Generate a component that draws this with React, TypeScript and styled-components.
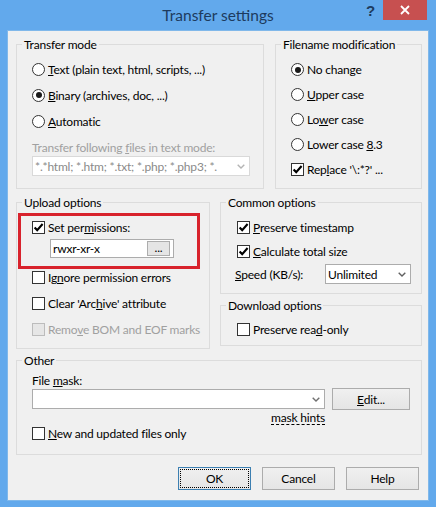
import styled, { createGlobalStyle } from "styled-components"

const GlobalStyle = createGlobalStyle`
  html, body {
    margin: 0;
    padding: 0;
  }
  body {
    font-family: Lato, "Noto Sans", sans-serif;
    font-size: 12px;
    letter-spacing: -0.2px;
    color: #000;
  }
`

type BoxProps = {
  checked?: boolean
  disabled?: boolean
}

const Check = (props: BoxProps) => (
  <CheckBox $disabled={props.disabled}>
    {props.checked && (
      <svg width="11" height="11" viewBox="0 0 11 11">
        <path d="M1.6 5.4 L4.2 8.1 L9.6 2" fill="none" stroke="#000" strokeWidth="2.1" />
      </svg>
    )}
  </CheckBox>
)

const Radio = (props: BoxProps) => (
  <RadioCircle>{props.checked && <RadioDot />}</RadioCircle>
)

const Chevron = ({ color }: { color: string }) => (
  <svg width="8" height="5" viewBox="0 0 8 5">
    <path d="M0.7 0.7 L4 4 L7.3 0.7" fill="none" stroke={color} strokeWidth="1.4" />
  </svg>
)

export default function App() {
  return (
    <>
      <GlobalStyle />
      <Window>
        <TitleBar>
          <span />
          <Title>Transfer settings</Title>
          <Caption>
            <HelpMark>?</HelpMark>
            <CloseButton>
              <svg width="10" height="10" viewBox="0 0 10 10">
                <path d="M1 1 L9 9 M9 1 L1 9" stroke="#fff" strokeWidth="1.8" />
              </svg>
            </CloseButton>
          </Caption>
        </TitleBar>

        <Client>
          <TopRow>
            <Group $h={152}>
              <Legend>Transfer mode</Legend>
              <Body $pad="4px 0 0 15px">
                <Option $h={26}>
                  <Radio />
                  <span><U>T</U>ext (plain text, html, scripts, ...)</span>
                </Option>
                <Option $h={26}>
                  <Radio checked />
                  <span><U>B</U>inary (archives, doc, ...)</span>
                </Option>
                <Option $h={26}>
                  <Radio />
                  <span><U>A</U>utomatic</span>
                </Option>
                <FieldLabel $disabled $mt={6}>
                  Transfer following <U>f</U>iles in text mode:
                </FieldLabel>
                <Combo $w={218} $disabled $mt={1}>
                  <ComboText $disabled>*.*html; *.htm; *.txt; *.php; *.php3; *.</ComboText>
                  <ComboArrow><Chevron color="#b4b4b4" /></ComboArrow>
                </Combo>
              </Body>
            </Group>

            <Group $h={152}>
              <Legend>Filename modification</Legend>
              <Body $pad="5px 0 0 15px">
                <Option $h={25}>
                  <Radio checked />
                  <span>No chan<U>g</U>e</span>
                </Option>
                <Option $h={25}>
                  <Radio />
                  <span><U>U</U>pper case</span>
                </Option>
                <Option $h={25}>
                  <Radio />
                  <span>Lo<U>w</U>er case</span>
                </Option>
                <Option $h={25}>
                  <Radio />
                  <span>Lower case <U>8</U>.3</span>
                </Option>
                <Option $h={25}>
                  <Check checked />
                  <span>Rep<U>l</U>ace '\:*?' ...</span>
                </Option>
              </Body>
            </Group>
          </TopRow>

          <MiddleRow>
            <Group $h={154}>
              <Legend>Upload options</Legend>
              <Body $pad="3px 0 0 1px">
                <Highlight>
                  <Option $h={18}>
                    <Check checked />
                    <span>Set per<U>m</U>issions:</span>
                  </Option>
                  <TextBox>
                    <span>rwxr-xr-x</span>
                    <DotsButton>...</DotsButton>
                  </TextBox>
                </Highlight>
                <OptionList $gap={10} $indent={14}>
                  <Option>
                    <Check />
                    <span>Ig<U>n</U>ore permission errors</span>
                  </Option>
                  <Option>
                    <Check />
                    <span>Clear 'Arc<U>h</U>ive' attribute</span>
                  </Option>
                  <Option $disabled>
                    <Check disabled />
                    <span>Remo<U>v</U>e BOM and EOF marks</span>
                  </Option>
                </OptionList>
              </Body>
            </Group>

            <RightColumn>
              <Group $h={99}>
                <Legend>Common options</Legend>
                <Body $pad="9px 0 0 16px">
                  <OptionList $gap={8}>
                    <Option>
                      <Check checked />
                      <span><U>P</U>reserve timestamp</span>
                    </Option>
                    <Option>
                      <Check checked />
                      <span><U>C</U>alculate total size</span>
                    </Option>
                  </OptionList>
                  <SpeedRow>
                    <SpeedLabel><U>S</U>peed (KB/s):</SpeedLabel>
                    <Combo $w={86}>
                      <ComboText>Unlimited</ComboText>
                      <ComboArrow><Chevron color="#606060" /></ComboArrow>
                    </Combo>
                  </SpeedRow>
                </Body>
              </Group>

              <Group $h={48}>
                <Legend>Download options</Legend>
                <Body $pad="8px 0 0 16px">
                  <Option>
                    <Check />
                    <span>Preserve rea<U>d</U>-only</span>
                  </Option>
                </Body>
              </Group>
            </RightColumn>
          </MiddleRow>

          <Group $h={102} $mt={4}>
            <Legend>Other</Legend>
            <Body $pad="5px 0 0 15px">
              <FieldLabel>File <U>m</U>ask:</FieldLabel>
              <MaskRow>
                <Combo $w={293}>
                  <ComboText />
                  <ComboArrow><Chevron color="#707070" /></ComboArrow>
                </Combo>
                <Button $w={78}><U>E</U>dit...</Button>
              </MaskRow>
              <Hints>
                <HintLink>mask hints</HintLink>
              </Hints>
              <Option>
                <Check />
                <span><U>N</U>ew and updated files only</span>
              </Option>
            </Body>
          </Group>

          <ButtonRow>
            <Button $default>OK</Button>
            <Button>Cancel</Button>
            <Button>Help</Button>
          </ButtonRow>
        </Client>
      </Window>
    </>
  )
}

const Window = styled.div`
  width: 436px;
  height: 507px;
  background-color: #62a9ec;
  display: flex;
  flex-direction: column;
`

const TitleBar = styled.div`
  height: 31px;
  flex-shrink: 0;
  display: grid;
  grid-template-columns: 1fr auto 1fr;
`

const Title = styled.div`
  font-size: 15.5px;
  letter-spacing: 0;
  line-height: 31px;
  color: #1d3b5e;
  padding-bottom: 2px;
`

const Caption = styled.div`
  justify-self: end;
  display: flex;
  align-items: flex-start;
  padding-right: 9px;
`

const HelpMark = styled.div`
  font-family: "Liberation Sans", sans-serif;
  font-weight: 700;
  font-size: 15px;
  line-height: 20px;
  color: #1d3b5e;
  margin-right: 8px;
  padding-top: 1px;
`

const CloseButton = styled.div`
  width: 44px;
  height: 20px;
  background-color: #c75050;
  display: flex;
  align-items: center;
  justify-content: center;
`

const Client = styled.div`
  flex: 1;
  margin: 0 8px 7px 8px;
  background-color: #f0f0f0;
  box-shadow: 0 0 0 1px #80b8ea;
  padding: 6px 6px 10px 8px;
  display: flex;
  flex-direction: column;
`

const TopRow = styled.div`
  display: grid;
  grid-template-columns: 248px 147px;
  column-gap: 11px;
`

const MiddleRow = styled.div`
  display: grid;
  grid-template-columns: 194px 202px;
  column-gap: 10px;
  margin-top: 6px;
`

const RightColumn = styled.div`
  display: flex;
  flex-direction: column;
  gap: 4px;
`

const Group = styled.fieldset<{ $h: number; $mt?: number }>`
  box-sizing: border-box;
  height: ${p => p.$h}px;
  margin: ${p => p.$mt ?? 0}px 0 0 0;
  padding: 0;
  min-width: 0;
  border: 1px solid #dcdcdc;
`

const Legend = styled.legend`
  padding: 0 2px;
  margin-left: 5px;
  line-height: 15px;
  color: #000;
`

const Body = styled.div<{ $pad: string }>`
  display: flex;
  flex-direction: column;
  align-items: flex-start;
  padding: ${p => p.$pad};
`

const U = styled.span`
  text-decoration: underline;
  text-underline-offset: 1px;
`

const Option = styled.label<{ $h?: number; $disabled?: boolean }>`
  display: flex;
  align-items: center;
  gap: 3px;
  height: ${p => p.$h ?? 16}px;
  white-space: nowrap;
  color: ${p => (p.$disabled ? "#a0a0a0" : "#000")};
`

const OptionList = styled.div<{ $gap: number; $indent?: number }>`
  display: flex;
  flex-direction: column;
  gap: ${p => p.$gap}px;
  margin-left: ${p => p.$indent ?? 0}px;
`

const CheckBox = styled.span<{ $disabled?: boolean }>`
  box-sizing: border-box;
  width: 13px;
  height: 13px;
  flex-shrink: 0;
  border: 1px solid ${p => (p.$disabled ? "#bcbcbc" : "#333333")};
  background-color: ${p => (p.$disabled ? "#e6e6e6" : "#ffffff")};
  display: flex;
  align-items: center;
  justify-content: center;
`

const RadioCircle = styled.span`
  box-sizing: border-box;
  width: 13px;
  height: 13px;
  flex-shrink: 0;
  border: 1px solid #333333;
  border-radius: 50%;
  background-color: #ffffff;
  display: flex;
  align-items: center;
  justify-content: center;
`

const RadioDot = styled.span`
  width: 6px;
  height: 6px;
  border-radius: 50%;
  background-color: #1a1a1a;
`

const FieldLabel = styled.div<{ $disabled?: boolean; $mt?: number }>`
  line-height: 15px;
  margin-top: ${p => p.$mt ?? 0}px;
  color: ${p => (p.$disabled ? "#a0a0a0" : "#000")};
  white-space: nowrap;
`

const Combo = styled.div<{ $w: number; $disabled?: boolean; $mt?: number }>`
  box-sizing: border-box;
  width: ${p => p.$w}px;
  height: 20px;
  margin-top: ${p => p.$mt ?? 0}px;
  border: 1px solid ${p => (p.$disabled ? "#d9d9d9" : "#acacac")};
  background-color: #ffffff;
  display: flex;
  align-items: center;
`

const ComboText = styled.div<{ $disabled?: boolean }>`
  flex: 1;
  min-width: 0;
  white-space: nowrap;
  padding-left: 2px;
  color: ${p => (p.$disabled ? "#8a8a8a" : "#000")};
`

const ComboArrow = styled.div`
  width: 17px;
  flex-shrink: 0;
  display: flex;
  justify-content: center;
  padding-top: 1px;
`

const Highlight = styled.div`
  box-sizing: border-box;
  width: 182px;
  border: 3px solid #d8222c;
  padding: 2px 0 8px 11px;
  display: flex;
  flex-direction: column;
  align-items: flex-start;
`

const TextBox = styled.div`
  box-sizing: border-box;
  width: 124px;
  height: 19px;
  margin: 3px 0 0 18px;
  border: 1px solid #acacac;
  background-color: #ffffff;
  display: flex;
  align-items: center;
  justify-content: space-between;
  padding: 0 3px 0 2px;
`

const DotsButton = styled.div`
  box-sizing: border-box;
  width: 23px;
  height: 15px;
  border: 1px solid #adadad;
  background-color: #e5e5e5;
  font-size: 12px;
  line-height: 11px;
  text-align: center;
`

const SpeedRow = styled.div`
  display: flex;
  align-items: center;
  margin: 5px 0 0 -2px;
`

const SpeedLabel = styled.span`
  width: 90px;
`

const MaskRow = styled.div`
  display: flex;
  align-items: center;
  gap: 7px;
`

const Hints = styled.div`
  width: 293px;
  line-height: 15px;
  text-align: right;
`

const HintLink = styled.span`
  text-decoration: underline dashed;
  text-underline-offset: 2px;
`

const ButtonRow = styled.div`
  display: flex;
  justify-content: flex-end;
  gap: 11px;
  margin-top: 12px;
  padding-right: 3px;
`

const Button = styled.div<{ $w?: number; $default?: boolean }>`
  box-sizing: border-box;
  width: ${p => p.$w ?? 73}px;
  height: ${p => (p.$w ? 22 : 23)}px;
  border: 1px solid ${p => (p.$default ? "#3c7fb1" : "#acacac")};
  background: linear-gradient(#f0f0f0, #e5e5e5);
  display: flex;
  align-items: center;
  justify-content: center;
  outline: ${p => (p.$default ? "1px dotted #000" : "none")};
  outline-offset: -3px;
`
